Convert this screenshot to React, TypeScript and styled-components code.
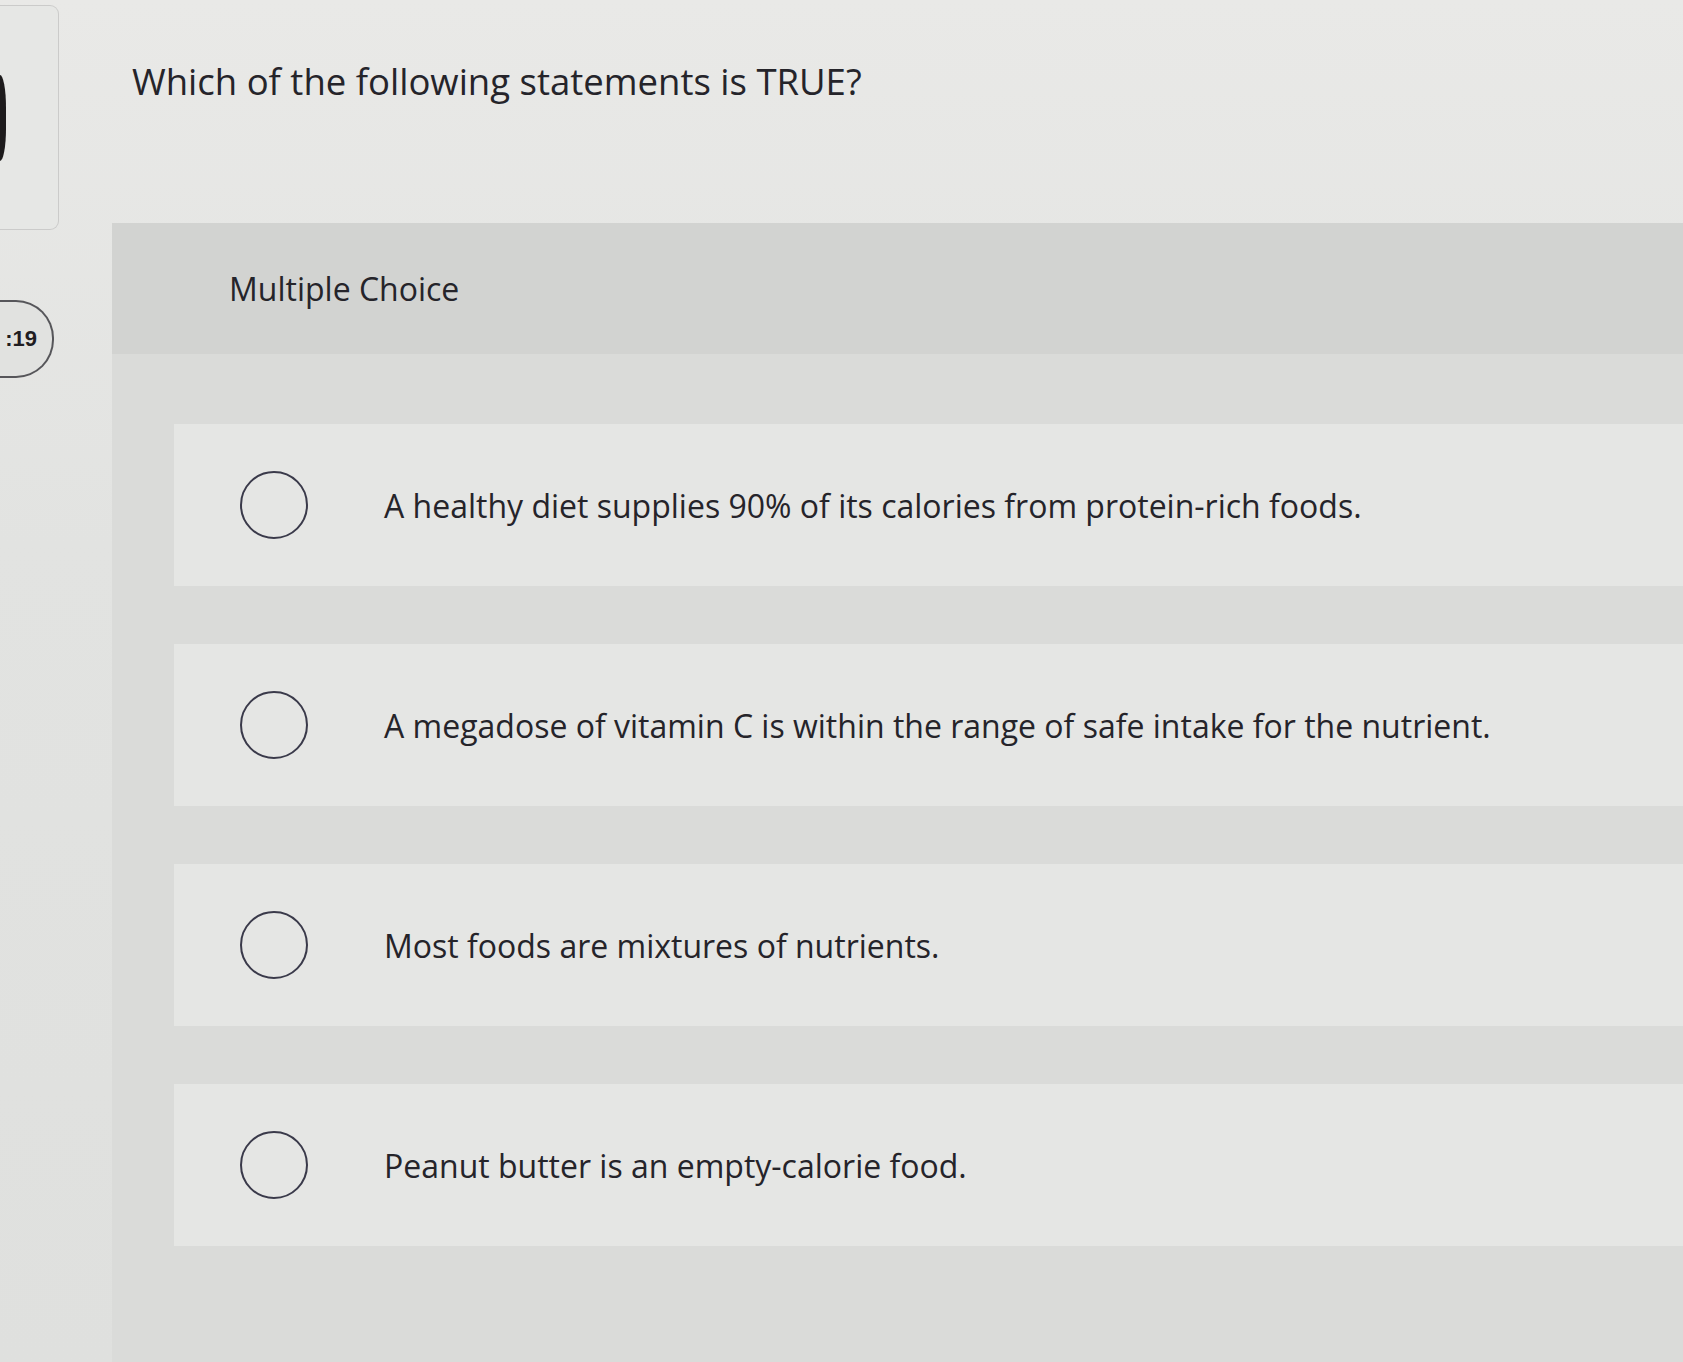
import styled, { createGlobalStyle } from 'styled-components';

const GlobalStyle = createGlobalStyle`
  html, body {
    margin: 0;
    padding: 0;
    background: #e3e4e2;
  }
  body {
    font-family: "Open Sans", Lato, "Liberation Sans", sans-serif;
    color: #25242a;
    overflow: hidden;
  }
`;

const Page = styled.div`
  display: flex;
  min-height: 1362px;
  background: linear-gradient(180deg, #e9e9e7 0%, #e2e3e1 40%, #dfe0de 100%);
`;

const SideRail = styled.aside`
  width: 59px;
  flex-shrink: 0;
  display: flex;
  flex-direction: column;
  padding-top: 5px;
`;

const SideCard = styled.div`
  height: 223px;
  border: 1.5px solid #cbcbca;
  border-left: none;
  border-radius: 0 9px 9px 0;
  background: #e6e7e5;
  display: flex;
  align-items: center;
`;

const SideKnob = styled.span`
  width: 6px;
  height: 86px;
  background: #1d1b1c;
  border-radius: 0 8px 8px 0 / 0 43px 43px 0;
`;

const Timer = styled.div`
  margin-top: 70px;
  width: 54px;
  height: 78px;
  box-sizing: border-box;
  border: 2px solid #56565a;
  border-left: none;
  border-radius: 0 38px 38px 0;
  background: #e1e2e0;
  display: flex;
  align-items: center;
  justify-content: flex-end;
  padding-right: 15px;
  font-family: "Liberation Sans", Arial, sans-serif;
  font-weight: 700;
  font-size: 22px;
  color: #1f1d22;
  white-space: nowrap;
`;

const Main = styled.main`
  flex: 1;
  margin-left: 53px;
  display: flex;
  flex-direction: column;
`;

const Question = styled.h1`
  margin: 58px 0 0 20px;
  height: 165px;
  font-size: 36.5px;
  line-height: 46px;
  font-weight: 400;
`;

const Panel = styled.section`
  flex: 1;
  background: #dadbd9;
  display: flex;
  flex-direction: column;
`;

const PanelHeader = styled.header`
  height: 131px;
  background: #d2d3d1;
  display: flex;
  align-items: center;
  padding-left: 117px;
  font-size: 32px;
`;

const OptionList = styled.div`
  display: flex;
  flex-direction: column;
  gap: 58px;
  padding: 70px 0 0 62px;
`;

const Option = styled.label`
  height: 162px;
  background: #e5e6e4;
  display: flex;
  align-items: center;
  padding-left: 66px;
  gap: 76px;
  font-size: 32px;
  cursor: pointer;
`;

const Radio = styled.span`
  width: 68px;
  height: 68px;
  box-sizing: border-box;
  flex-shrink: 0;
  border: 2.5px solid #3a3a4a;
  border-radius: 50%;
`;

const options = [
  'A healthy diet supplies 90% of its calories from protein-rich foods.',
  'A megadose of vitamin C is within the range of safe intake for the nutrient.',
  'Most foods are mixtures of nutrients.',
  'Peanut butter is an empty-calorie food.',
];

export default function App() {
  return (
    <>
      <GlobalStyle />
      <Page>
        <SideRail>
          <SideCard>
            <SideKnob />
          </SideCard>
          <Timer>:19</Timer>
        </SideRail>
        <Main>
          <Question>Which of the following statements is TRUE?</Question>
          <Panel>
            <PanelHeader>Multiple Choice</PanelHeader>
            <OptionList>
              {options.map((text) => (
                <Option key={text}>
                  <Radio />
                  {text}
                </Option>
              ))}
            </OptionList>
          </Panel>
        </Main>
      </Page>
    </>
  );
}
